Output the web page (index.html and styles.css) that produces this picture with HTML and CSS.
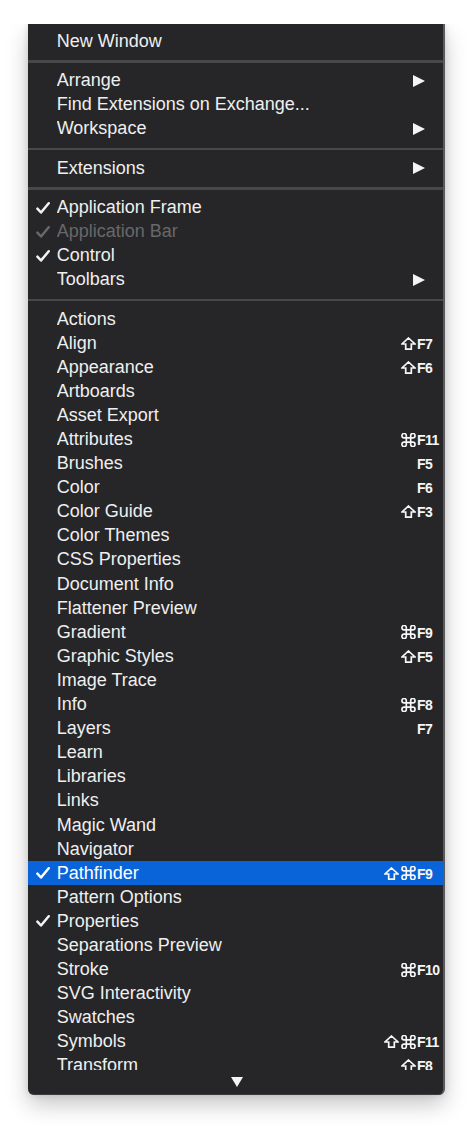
FILE: index.html
```html
<!DOCTYPE html>
<html lang="en">
<head>
<meta charset="utf-8">
<title>Window menu</title>
<link rel="stylesheet" href="styles.css">
</head>
<body>
<svg class="defs" width="0" height="0" aria-hidden="true">
  <defs>
    <symbol id="i-check" viewBox="0 0 14 12">
      <path d="M1.4 6.6 L5 10.5 L12.7 1.3" fill="none" stroke="currentColor" stroke-width="2.5" stroke-linecap="round" stroke-linejoin="round"/>
    </symbol>
    <symbol id="i-shift" viewBox="0 0 15 13">
      <path d="M7.5 1 L14 7 H10.3 V12.2 H4.7 V7 H1 Z" fill="none" stroke="currentColor" stroke-width="1.7" stroke-linejoin="miter"/>
    </symbol>
    <symbol id="i-cmd" viewBox="0 0 16 16">
      <path d="M5.5 5.5 V3 A2.5 2.5 0 1 0 3 5.5 H13 A2.5 2.5 0 1 0 10.5 3 V13 A2.5 2.5 0 1 0 13 10.5 H3 A2.5 2.5 0 1 0 5.5 13 Z" fill="none" stroke="currentColor" stroke-width="1.9"/>
    </symbol>
    <symbol id="i-sub" viewBox="0 0 12 12">
      <path d="M0 0 L12 6 L0 12 Z" fill="currentColor"/>
    </symbol>
  </defs>
</svg>

<div class="stage">
  <div class="menu">
    <div class="row"><span class="check"></span><span class="label">New Window</span></div>
    <div class="sep"></div>
    <div class="row"><span class="check"></span><span class="label">Arrange</span><svg class="sub"><use href="#i-sub"/></svg></div>
    <div class="row"><span class="check"></span><span class="label">Find Extensions on Exchange...</span></div>
    <div class="row"><span class="check"></span><span class="label">Workspace</span><svg class="sub"><use href="#i-sub"/></svg></div>
    <div class="sep"></div>
    <div class="row"><span class="check"></span><span class="label">Extensions</span><svg class="sub"><use href="#i-sub"/></svg></div>
    <div class="sep"></div>
    <div class="row"><span class="check"><svg class="tick"><use href="#i-check"/></svg></span><span class="label">Application Frame</span></div>
    <div class="row disabled"><span class="check"><svg class="tick"><use href="#i-check"/></svg></span><span class="label">Application Bar</span></div>
    <div class="row"><span class="check"><svg class="tick"><use href="#i-check"/></svg></span><span class="label">Control</span></div>
    <div class="row"><span class="check"></span><span class="label">Toolbars</span><svg class="sub"><use href="#i-sub"/></svg></div>
    <div class="sep"></div>

    <div class="list">
      <div class="row"><span class="check"></span><span class="label">Actions</span></div>
      <div class="row"><span class="check"></span><span class="label">Align</span><span class="keys"><span class="mods"><svg class="shift"><use href="#i-shift"/></svg></span><span class="key">F7</span></span></div>
      <div class="row"><span class="check"></span><span class="label">Appearance</span><span class="keys"><span class="mods"><svg class="shift"><use href="#i-shift"/></svg></span><span class="key">F6</span></span></div>
      <div class="row"><span class="check"></span><span class="label">Artboards</span></div>
      <div class="row"><span class="check"></span><span class="label">Asset Export</span></div>
      <div class="row"><span class="check"></span><span class="label">Attributes</span><span class="keys"><span class="mods"><svg class="cmd"><use href="#i-cmd"/></svg></span><span class="key">F11</span></span></div>
      <div class="row"><span class="check"></span><span class="label">Brushes</span><span class="keys"><span class="mods"></span><span class="key">F5</span></span></div>
      <div class="row"><span class="check"></span><span class="label">Color</span><span class="keys"><span class="mods"></span><span class="key">F6</span></span></div>
      <div class="row"><span class="check"></span><span class="label">Color Guide</span><span class="keys"><span class="mods"><svg class="shift"><use href="#i-shift"/></svg></span><span class="key">F3</span></span></div>
      <div class="row"><span class="check"></span><span class="label">Color Themes</span></div>
      <div class="row"><span class="check"></span><span class="label">CSS Properties</span></div>
      <div class="row"><span class="check"></span><span class="label">Document Info</span></div>
      <div class="row"><span class="check"></span><span class="label">Flattener Preview</span></div>
      <div class="row"><span class="check"></span><span class="label">Gradient</span><span class="keys"><span class="mods"><svg class="cmd"><use href="#i-cmd"/></svg></span><span class="key">F9</span></span></div>
      <div class="row"><span class="check"></span><span class="label">Graphic Styles</span><span class="keys"><span class="mods"><svg class="shift"><use href="#i-shift"/></svg></span><span class="key">F5</span></span></div>
      <div class="row"><span class="check"></span><span class="label">Image Trace</span></div>
      <div class="row"><span class="check"></span><span class="label">Info</span><span class="keys"><span class="mods"><svg class="cmd"><use href="#i-cmd"/></svg></span><span class="key">F8</span></span></div>
      <div class="row"><span class="check"></span><span class="label">Layers</span><span class="keys"><span class="mods"></span><span class="key">F7</span></span></div>
      <div class="row"><span class="check"></span><span class="label">Learn</span></div>
      <div class="row"><span class="check"></span><span class="label">Libraries</span></div>
      <div class="row"><span class="check"></span><span class="label">Links</span></div>
      <div class="row"><span class="check"></span><span class="label">Magic Wand</span></div>
      <div class="row"><span class="check"></span><span class="label">Navigator</span></div>
      <div class="row active"><span class="check"><svg class="tick"><use href="#i-check"/></svg></span><span class="label">Pathfinder</span><span class="keys"><span class="mods"><svg class="shift"><use href="#i-shift"/></svg><svg class="cmd"><use href="#i-cmd"/></svg></span><span class="key">F9</span></span></div>
      <div class="row"><span class="check"></span><span class="label">Pattern Options</span></div>
      <div class="row"><span class="check"><svg class="tick"><use href="#i-check"/></svg></span><span class="label">Properties</span></div>
      <div class="row"><span class="check"></span><span class="label">Separations Preview</span></div>
      <div class="row"><span class="check"></span><span class="label">Stroke</span><span class="keys"><span class="mods"><svg class="cmd"><use href="#i-cmd"/></svg></span><span class="key">F10</span></span></div>
      <div class="row"><span class="check"></span><span class="label">SVG Interactivity</span></div>
      <div class="row"><span class="check"></span><span class="label">Swatches</span></div>
      <div class="row"><span class="check"></span><span class="label">Symbols</span><span class="keys"><span class="mods"><svg class="shift"><use href="#i-shift"/></svg><svg class="cmd"><use href="#i-cmd"/></svg></span><span class="key">F11</span></span></div>
      <div class="row"><span class="check"></span><span class="label">Transform</span><span class="keys"><span class="mods"><svg class="shift"><use href="#i-shift"/></svg></span><span class="key">F8</span></span></div>
    </div>

    <div class="foot">
      <svg class="down" viewBox="0 0 12 10"><path d="M0 0 H12 L6 10 Z" fill="currentColor"/></svg>
    </div>
  </div>
</div>
</body>
</html>
```

FILE: styles.css
```css
html, body {
  margin: 0;
  padding: 0;
  background: #ffffff;
}

.defs {
  position: absolute;
  width: 0;
  height: 0;
  overflow: hidden;
}

.stage {
  margin-top: 24px;
  padding: 0 0 40px 28px;
  overflow: hidden;
}

.menu {
  width: 415px;
  background: #262628;
  border-right: 2px solid #5a5a5c;
  border-bottom: 1px solid #3c3c3e;
  border-radius: 0 0 6px 6px;
  padding-top: 5px;
  box-shadow: 0 10px 22px rgba(0, 0, 0, 0.22), 0 0 7px rgba(0, 0, 0, 0.12);
  font-family: "Liberation Sans", Arial, Helvetica, sans-serif;
  font-size: 18px;
  color: #efefef;
}

.row {
  display: flex;
  align-items: center;
  height: 24px;
  padding-right: 2px;
  white-space: nowrap;
}

.list .row {
  height: 24.1px;
  flex: none;
}

.check {
  width: 28.7px;
  box-sizing: border-box;
  padding-left: 8.3px;
  display: flex;
  align-items: center;
  flex: none;
}

.tick {
  width: 14px;
  height: 12px;
  color: #f4f4f4;
}

.label {
  flex: 1;
  overflow: hidden;
}

.disabled {
  color: #68686a;
}

.disabled .tick {
  color: #68686a;
}

.active {
  background: #0a64d9;
  color: #ffffff;
}

.active .tick {
  color: #ffffff;
}

.sub {
  width: 12px;
  height: 12px;
  margin-right: 16px;
  color: #f4f4f4;
  flex: none;
}

.keys {
  display: flex;
  align-items: center;
  flex: none;
  color: #f6f6f6;
}

.mods {
  width: 40px;
  margin-right: 1px;
  display: flex;
  justify-content: flex-end;
  align-items: center;
  gap: 2.5px;
}

.shift {
  width: 15px;
  height: 13px;
}

.cmd {
  width: 15px;
  height: 14px;
}

.key {
  width: 24px;
  font-size: 14px;
  font-weight: bold;
  letter-spacing: -0.5px;
  padding-top: 1px;
}

.sep {
  height: 2.5px;
  background: #48484a;
  margin: 7px 0 6px;
}

.list {
  height: 763px;
  overflow: hidden;
}

.foot {
  height: 24px;
  display: flex;
  justify-content: center;
  align-items: center;
  padding-left: 3px;
}

.down {
  width: 12px;
  height: 10px;
  color: #f4f4f4;
}
```
